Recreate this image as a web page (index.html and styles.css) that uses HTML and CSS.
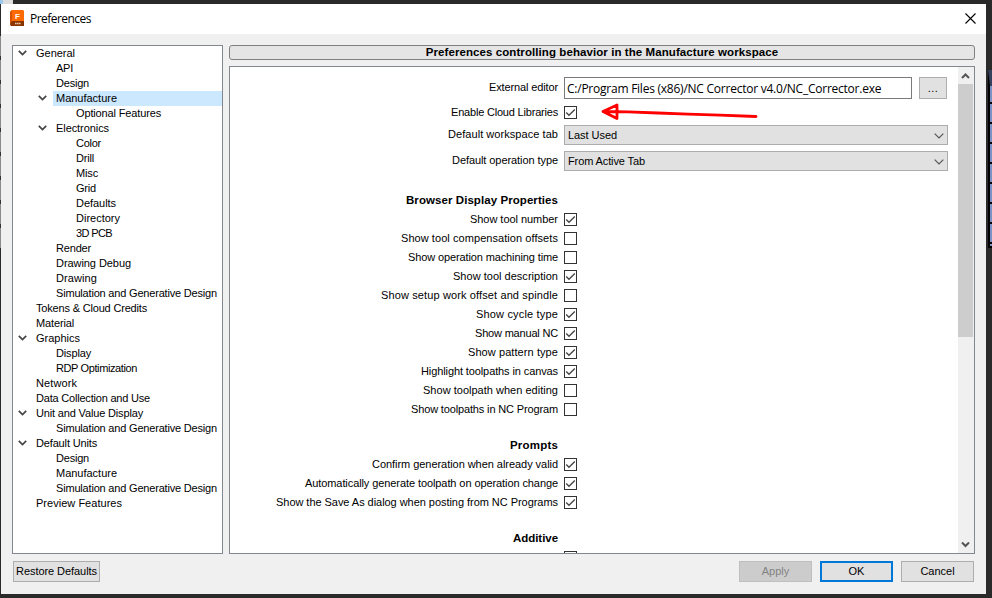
FILE: index.html
```html
<!DOCTYPE html>
<html lang="en">
<head>
  <meta charset="UTF-8">
  <meta name="viewport" content="width=device-width, initial-scale=1.0">
  <title>Preferences</title>
  <link rel="stylesheet" href="styles.css">
</head>
<body>
  <!-- Bits of the desktop around the dialog -->
  <div class="desktop-corner"></div>
  <div class="desktop-left"></div>
  <div class="desktop-sheet"></div>

  <div class="dialog">
    <div class="titlebar">
      <svg class="logo" width="15" height="17" viewBox="0 0 15 17">
        <path d="M2 0H13L14 1V16H1L0 14V2Z" fill="#ff6b00"/>
        <path d="M0 2L2 0V12L0 14Z" fill="#d65200"/>
        <path d="M0 14L2 11H14V16H1Z" fill="#8a3500"/>
        <text x="5" y="9" class="logo-letter">F</text>
        <path d="M5 13.5H11" stroke="#e8c4ab" stroke-width="1.4" stroke-dasharray="1.6 .4"/>
      </svg>
      <span class="title">Preferences</span>
      <svg class="close" width="11" height="11" viewBox="0 0 11 11">
        <path d="M.5 .5L10.5 10.5M10.5 .5L.5 10.5" stroke="#000" stroke-width="1.1"/>
      </svg>
    </div>

    <div class="content">
      <div class="tree" id="tree"></div>

      <div class="main">
        <div class="header">Preferences controlling behavior in the Manufacture workspace</div>
        <div class="panel">
          <div class="form">
            <div class="row row-editor">
              <label><span data-width="69">External editor</span></label>
              <div class="input">C:/Program Files (x86)/NC Corrector v4.0/NC_Corrector.exe</div>
              <div class="button browse">...</div>
            </div>
            <div class="row row-cloud">
              <label><span data-width="107">Enable Cloud Libraries</span></label>
              <span class="check on"></span>
            </div>
            <div class="row row-combo">
              <label><span data-width="110">Default workspace tab</span></label>
              <div class="combo"><span data-width="49">Last Used</span></div>
            </div>
            <div class="row row-combo">
              <label><span data-width="106">Default operation type</span></label>
              <div class="combo"><span data-width="77">From Active Tab</span></div>
            </div>

            <div class="row heading first"><label><span data-width="152">Browser Display Properties</span></label></div>
            <div class="row"><label><span data-width="88">Show tool number</span></label><span class="check on"></span></div>
            <div class="row"><label><span data-width="157">Show tool compensation offsets</span></label><span class="check"></span></div>
            <div class="row"><label><span data-width="150">Show operation machining time</span></label><span class="check"></span></div>
            <div class="row"><label><span data-width="105">Show tool description</span></label><span class="check on"></span></div>
            <div class="row"><label><span data-width="177">Show setup work offset and spindle</span></label><span class="check"></span></div>
            <div class="row"><label><span data-width="82">Show cycle type</span></label><span class="check on"></span></div>
            <div class="row"><label><span data-width="83">Show manual NC</span></label><span class="check on"></span></div>
            <div class="row"><label><span data-width="90">Show pattern type</span></label><span class="check on"></span></div>
            <div class="row"><label><span data-width="137">Highlight toolpaths in canvas</span></label><span class="check on"></span></div>
            <div class="row"><label><span data-width="135">Show toolpath when editing</span></label><span class="check"></span></div>
            <div class="row"><label><span data-width="147">Show toolpaths in NC Program</span></label><span class="check"></span></div>

            <div class="row heading"><label><span data-width="48">Prompts</span></label></div>
            <div class="row"><label><span data-width="186">Confirm generation when already valid</span></label><span class="check on"></span></div>
            <div class="row"><label><span data-width="253">Automatically generate toolpath on operation change</span></label><span class="check on"></span></div>
            <div class="row"><label><span data-width="282">Show the Save As dialog when posting from NC Programs</span></label><span class="check on"></span></div>

            <div class="row heading"><label><span data-width="45">Additive</span></label></div>
            <div class="row"><label></label><span class="check"></span></div>
          </div>

          <div class="scrollbar">
            <svg class="scroll-arrow" width="15" height="17" viewBox="0 0 15 17">
              <path d="M4 11L7.5 7.5L11 11" fill="none" stroke="#555" stroke-width="2"/>
            </svg>
            <div class="thumb"></div>
            <svg class="scroll-arrow down" width="15" height="17" viewBox="0 0 15 17">
              <path d="M4 6.5L7.5 10L11 6.5" fill="none" stroke="#555" stroke-width="2"/>
            </svg>
          </div>
        </div>
      </div>
    </div>

    <div class="footer">
      <div class="button restore"><span data-width="81">Restore Defaults</span></div>
      <div class="button disabled">Apply</div>
      <div class="button primary">OK</div>
      <div class="button">Cancel</div>
    </div>
  </div>

  <!-- Red hand drawn arrow on top of the dialog -->
  <svg class="arrow" width="160" height="20" viewBox="0 0 160 20">
    <path d="M3 9.5L17 3V16.5L3 9.5L28 9.9L58 11L88 12.1L120 13.2L156 14.5" fill="none" stroke="#f00" stroke-width="2.8" stroke-linejoin="round" stroke-linecap="round"/>
  </svg>

  <script src="tree.js"></script>
</body>
</html>
```
FILE: tree.js
```js
// [level, label, text width, expanded]
const items = [
  [0, 'General', 39, true],
  [1, 'API', 17],
  [1, 'Design', 33],
  [1, 'Manufacture', 61, true],
  [2, 'Optional Features', 85],
  [1, 'Electronics', 53, true],
  [2, 'Color', 25],
  [2, 'Drill', 18],
  [2, 'Misc', 22],
  [2, 'Grid', 20],
  [2, 'Defaults', 40],
  [2, 'Directory', 44],
  [2, '3D PCB', 36],
  [1, 'Render', 35],
  [1, 'Drawing Debug', 75],
  [1, 'Drawing', 41],
  [1, 'Simulation and Generative Design', 161],
  [0, 'Tokens & Cloud Credits', 111],
  [0, 'Material', 38],
  [0, 'Graphics', 44, true],
  [1, 'Display', 35],
  [1, 'RDP Optimization', 81],
  [0, 'Network', 41],
  [0, 'Data Collection and Use', 114],
  [0, 'Unit and Value Display', 107, true],
  [1, 'Simulation and Generative Design', 161],
  [0, 'Default Units', 61, true],
  [1, 'Design', 33],
  [1, 'Manufacture', 61],
  [1, 'Simulation and Generative Design', 161],
  [0, 'Preview Features', 86]
];

const selected = 3;
const chevron = '<svg width="9" height="6" viewBox="0 0 9 6"><path d="M.8 .8L4.5 4.5L8.2 .8" fill="none" stroke="#444" stroke-width="1.7"/></svg>';
const tree = document.getElementById('tree');

items.forEach(([level, label, width, expanded], index) => {
  const node = document.createElement('div');
  node.className = 'node level' + level;

  const toggle = document.createElement('span');
  toggle.className = 'toggle';
  if (expanded) toggle.innerHTML = chevron;

  const name = document.createElement('span');
  name.className = index === selected ? 'name selected' : 'name';

  const text = document.createElement('span');
  text.dataset.width = width;
  text.textContent = label;

  name.append(text);
  node.append(toggle, name);
  tree.append(node);
});

// Tighten or loosen each label to its own width
document.querySelectorAll('[data-width]').forEach(text => {
  const natural = text.getBoundingClientRect().width;
  const spacing = (Number(text.dataset.width) - natural) / text.textContent.length;
  text.style.letterSpacing = spacing.toFixed(3) + 'px';
});

// Draw the tick in the checked boxes
document.querySelectorAll('.check.on').forEach(box => {
  box.innerHTML = '<svg width="11" height="11" viewBox="0 0 11 11"><path d="M1.2 5.5L4 8.3L9.8 2.5" fill="none" stroke="#444" stroke-width="1.3"/></svg>';
});

document.querySelectorAll('.combo').forEach(combo => {
  combo.insertAdjacentHTML('beforeend', '<svg width="10" height="6" viewBox="0 0 10 6"><path d="M.7 .7L5 5L9.3 .7" fill="none" stroke="#555" stroke-width="1.2"/></svg>');
});
```
FILE: styles.css
```css
* {
  box-sizing: border-box;
}

body {
  margin: 0;
  width: 992px;
  height: 598px;
  padding: 4px 6px 4px 1px;
  overflow: hidden;
  position: relative;
  background: #2a2a2a;
  color: #000;
  font-family: "Liberation Sans", Arial, sans-serif;
  font-size: 11px;
  white-space: nowrap;
}

svg {
  display: block;
  flex: none;
}

/* Desktop behind the dialog */
.desktop-corner {
  position: absolute;
  left: 0;
  top: 0;
  width: 13px;
  height: 4px;
  background: linear-gradient(90deg, #9cc8ec 0 3px, #dcdcdc 3px);
}

.desktop-left {
  position: absolute;
  left: 0;
  top: 36px;
  width: 1px;
  height: 212px;
  background: repeating-linear-gradient(#8a8a8a 0 20px, #333 20px 24px);
}

.desktop-sheet {
  position: absolute;
  left: 988px;
  top: 70px;
  width: 4px;
  height: 178px;
  border: 2px solid #000;
  border-top: 16px solid #35405c;
  border-right: 0;
  background: repeating-linear-gradient(#7b93c4 0 16px, #000 16px 18px, #7b93c4 18px 20px);
}

.dialog {
  width: 985px;
  height: 590px;
  display: flex;
  flex-direction: column;
  position: relative;
  background: #f0f0f0;
}

/* Title bar */
.titlebar {
  height: 30px;
  display: flex;
  align-items: center;
  padding: 0 10px 2px 9px;
  background: #fff;
}

.logo-letter {
  font-size: 8px;
  font-weight: bold;
  fill: #fff;
}

.title {
  flex: 1;
  padding: 1px 0 0 5px;
  font-family: "Open Sans", "Noto Sans", sans-serif;
  font-size: 12px;
  letter-spacing: -0.55px;
}

.content {
  height: 509px;
  margin-top: 11px;
  padding: 0 11px;
  display: flex;
  gap: 6px;
}

/* Tree on the left */
.tree {
  width: 211px;
  border: 1px solid #828790;
  background: #fff;
}

.node {
  display: flex;
  height: 15px;
  line-height: 15px;
}

.toggle {
  flex: none;
  width: 20px;
  padding: 4px 0 0 5px;
}

.name {
  flex: 1;
  min-width: 0;
  padding-left: 3px;
}

.level1 {
  padding-left: 20px;
}

.level2 {
  padding-left: 40px;
}

.selected {
  background: #cce8ff;
}

/* Right side */
.main {
  width: 746px;
  display: flex;
  flex-direction: column;
  gap: 6px;
}

.header {
  height: 15px;
  line-height: 13px;
  border: 1px solid #808080;
  border-radius: 3px;
  background: #e5e5e5;
  text-align: center;
  font-weight: bold;
  font-size: 11.5px;
  letter-spacing: 0.08px;
}

.panel {
  flex: 1;
  min-height: 0;
  display: flex;
  overflow: hidden;
  border: 1px solid #828790;
  background: #fff;
}

.form {
  width: 728px;
  padding-top: 10px;
}

.row {
  display: flex;
  align-items: center;
  gap: 6px;
  height: 19px;
}

.row label {
  width: 328px;
  padding-bottom: 2px;
  text-align: right;
}

.row-editor {
  height: 22px;
}

.row-cloud {
  height: 26px;
  align-items: flex-end;
  padding-bottom: 6px;
}

.row-cloud label {
  padding-bottom: 1px;
}

.row-combo {
  height: 20px;
  margin-bottom: 6px;
}

.heading {
  margin-top: 17px;
  font-weight: bold;
  font-size: 11.5px;
}

.heading.first {
  margin-top: 20px;
}

.input {
  width: 348px;
  height: 22px;
  line-height: 21px;
  padding-left: 2px;
  border: 1px solid #7a7a7a;
  font-family: "Open Sans", "Noto Sans", sans-serif;
  font-size: 12px;
  letter-spacing: -0.24px;
}

.check {
  width: 13px;
  height: 13px;
  border: 1px solid #333;
  background: #fff;
}

.combo {
  width: 384px;
  height: 20px;
  display: flex;
  align-items: center;
  justify-content: space-between;
  padding: 0 3px;
  border: 1px solid #adadad;
  background: #e1e1e1;
}

.combo svg {
  margin-top: 2px;
}

/* Scrollbar */
.scrollbar {
  width: 16px;
  display: flex;
  flex-direction: column;
  padding-right: 1px;
  background: #f0f0f0;
}

.thumb {
  height: 253px;
  background: #cdcdcd;
}

.down {
  margin-top: auto;
}

/* Buttons */
.button {
  width: 73px;
  height: 21px;
  display: flex;
  align-items: center;
  justify-content: center;
  padding-bottom: 1px;
  border: 1px solid #adadad;
  background: #e1e1e1;
}

.browse {
  width: 28px;
  height: 22px;
  margin-left: 1px;
  letter-spacing: 0.5px;
}

.footer {
  display: flex;
  gap: 8px;
  padding: 7px 12px 0;
}

.restore {
  width: 87px;
  margin-right: auto;
}

.disabled {
  border-color: #bfbfbf;
  background: #ccc;
  color: #838383;
}

.primary {
  border: 2px solid #0078d7;
}

.arrow {
  position: absolute;
  left: 600px;
  top: 102px;
}
```
